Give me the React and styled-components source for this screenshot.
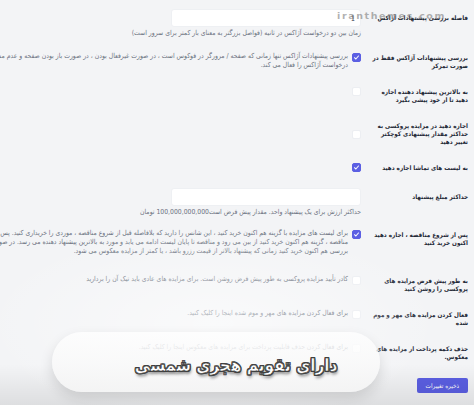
import styled, { createGlobalStyle } from 'styled-components';

const GlobalStyle = createGlobalStyle`
  html, body {
    margin: 0;
    padding: 0;
    background: #f3f4f6;
    direction: rtl;
    overflow: hidden;
    height: 405px;
  }
  body {
    font-family: "DejaVu Sans Condensed", "DejaVu Sans", sans-serif;
    color: #1f2937;
  }
`;

const settings = [
  {
    label: 'فاصله بررسی پیشنهادات آژاکس',
    type: 'input',
    value: '1',
    help: 'زمان بین دو درخواست آژاکس در ثانیه (فواصل بزرگتر به معنای بار کمتر برای سرور است)',
  },
  {
    label: 'بررسی پیشنهادات آژاکس فقط در صورت تمرکز',
    type: 'check',
    checked: true,
    help: 'بررسی پیشنهادات آژاکس تنها زمانی که صفحه / مرورگر در فوکوس است ، در صورت غیرفعال بودن ، در صورت باز بودن صفحه و عدم مشاهده آن ، درخواست آژاکس را فعال می کند.',
  },
  {
    label: 'به بالاترین پیشنهاد دهنده اجازه دهید تا از خود پیشی بگیرد',
    type: 'check',
    checked: false,
  },
  {
    label: 'اجازه دهید در مزایده پروکسی به حداکثر مقدار پیشنهادی کوچکتر تغییر دهید',
    type: 'check',
    checked: false,
    middle: true,
  },
  {
    label: 'به لیست های تماشا اجازه دهید',
    type: 'check',
    checked: true,
  },
  {
    label: 'حداکثر مبلغ پیشنهاد',
    type: 'input',
    value: '',
    help: 'حداکثر ارزش برای یک پیشنهاد واحد. مقدار پیش فرض است100,000,000,000 تومان',
  },
  {
    label: 'پس از شروع مناقصه ، اجازه دهید اکنون خرید کنید',
    type: 'check',
    checked: true,
    tall: true,
    help: 'برای لیست های مزایده با گزینه هم اکنون خرید کنید ، این شانس را دارید که بلافاصله قبل از شروع مناقصه ، موردی را خریداری کنید. پس از شروع مناقصه ، گزینه هم اکنون خرید کنید از بین می رود و مناقصه تا پایان لیست ادامه می یابد و مورد به بالاترین پیشنهاد دهنده می رسد. در صورت عدم بررسی هم اکنون خرید کنید زمانی که پیشنهاد بالاتر از قیمت رزرو باشد ، یا کمتر از مزایده معکوس می شود.',
  },
  {
    label: 'به طور پیش فرض مزایده های پروکسی را روشن کنید',
    type: 'check',
    checked: false,
    help: 'کادر تأیید مزایده پروکسی به طور پیش فرض روشن است. برای مزایده های عادی باید تیک آن را بردارید',
  },
  {
    label: 'فعال کردن مزایده های مهر و موم شده',
    type: 'check',
    checked: false,
    help: 'برای فعال کردن مزایده های مهر و موم شده اینجا را کلیک کنید.',
  },
  {
    label: 'حذف دکمه پرداخت از مزایده های معکوس.',
    type: 'check',
    checked: false,
    help: 'برای فعال کردن حذف قابلیت پرداخت برای مزایده های معکوس اینجا را کلیک کنید.',
  },
];

const Page = () => (
  <>
    <GlobalStyle />
    <Screen>
      <Form>
        {settings.map((s, i) => (
          <Row key={i} $middle={s.middle} $tall={s.tall}>
            <Label $input={s.type === 'input'}>{s.label}</Label>
            <Control>
              {s.type === 'input' ? (
                <>
                  <TextInput defaultValue={s.value} />
                  {s.help && <Help $below>{s.help}</Help>}
                </>
              ) : (
                <CheckLine>
                  <Box $checked={s.checked}>
                    {s.checked && (
                      <svg width="7" height="7" viewBox="0 0 16 16">
                        <path d="M3.5 8.5l3 3 6-7" fill="none" stroke="#fff" strokeWidth="2.4" strokeLinecap="round" strokeLinejoin="round" />
                      </svg>
                    )}
                  </Box>
                  {s.help && <Help>{s.help}</Help>}
                </CheckLine>
              )}
            </Control>
          </Row>
        ))}
        <Footer>
          <SaveButton>ذخیره تغییرات</SaveButton>
        </Footer>
      </Form>

      <Watermark>iranthemes.com</Watermark>
      <Vignette />
      <Banner>
        <BannerText>دارای تقویم هجری شمسی</BannerText>
      </Banner>
    </Screen>
  </>
);

export default Page;

const Screen = styled.div`
  position: relative;
  height: 405px;
  overflow: hidden;
`;

const Form = styled.div`
  width: 514px;
  padding: 2px 6px 0 0;
  box-sizing: border-box;
`;

const Row = styled.div`
  display: grid;
  grid-template-columns: 98px 1fr;
  column-gap: 9px;
  align-items: ${(p) => (p.$middle ? 'center' : 'start')};
  padding: ${(p) => (p.$tall ? '5px 0 12px' : '7px 0')};
`;

const Label = styled.div`
  font-size: 6.3px;
  font-weight: 700;
  line-height: 8px;
  color: #1f2937;
  padding: ${(p) => (p.$input ? '5px 0 2px' : '2px 0')};
`;

const Control = styled.div`
  display: flex;
  flex-direction: column;
  min-width: 0;
`;

const TextInput = styled.input`
  width: 190px;
  height: 18px;
  box-sizing: border-box;
  border: 1px solid #eef0f3;
  border-radius: 3px;
  background: #fff;
  padding: 0 5px;
  font-family: inherit;
  font-size: 7.5px;
  color: #374151;
  direction: rtl;
  outline: none;
`;

const CheckLine = styled.div`
  display: flex;
  align-items: flex-start;
  gap: 4px;
`;

const Box = styled.span`
  flex: none;
  width: 9px;
  height: 9px;
  margin-top: 0.5px;
  border-radius: 2px;
  box-sizing: border-box;
  display: flex;
  align-items: center;
  justify-content: center;
  background: ${(p) => (p.$checked ? '#5b5fe3' : '#fff')};
  border: 1px solid ${(p) => (p.$checked ? '#5b5fe3' : '#eceef2')};
`;

const Help = styled.p`
  margin: ${(p) => (p.$below ? '2px 0 0' : '0')};
  font-size: 6.8px;
  line-height: 9px;
  color: #6b7280;
`;

const Footer = styled.div`
  padding: 8px 0 0;
  display: flex;
`;

const SaveButton = styled.button`
  height: 15px;
  padding: 0 9px;
  border: none;
  border-radius: 2px;
  background: #5b5fe3;
  color: #fff;
  font-family: inherit;
  font-size: 6.3px;
`;

const Watermark = styled.div`
  position: absolute;
  top: 10px;
  right: 28px;
  direction: ltr;
  font-family: "DejaVu Sans", sans-serif;
  font-weight: 700;
  font-size: 9.5px;
  letter-spacing: 1.6px;
  color: rgba(110, 110, 110, 0.55);
  pointer-events: none;
`;

const Vignette = styled.div`
  position: absolute;
  inset: 0;
  pointer-events: none;
  background:
    radial-gradient(ellipse 70% 35% at 45% 80%, rgba(255, 255, 255, 0.55), rgba(255, 255, 255, 0) 70%),
    linear-gradient(to bottom, rgba(0, 0, 0, 0) 90%, rgba(0, 0, 0, 0.09) 100%);
`;

const Banner = styled.div`
  position: absolute;
  left: 52px;
  top: 332px;
  width: 328px;
  height: 60px;
  border-radius: 30px;
  background: linear-gradient(to bottom, rgba(255, 255, 255, 0.72), rgba(246, 246, 246, 0.85));
  box-shadow: 0 6px 14px rgba(0, 0, 0, 0.12);
  display: flex;
  align-items: center;
  justify-content: center;
  padding: 6px 0 0 40px;
  box-sizing: border-box;
`;

const BannerText = styled.div`
  font-family: "DejaVu Sans Condensed", "DejaVu Sans", sans-serif;
  font-weight: 700;
  font-size: 17px;
  color: #fff;
  -webkit-text-stroke: 0.5px #333;
  text-shadow:
    1px 0 0 #444, -1px 0 0 #444, 0 1px 0 #444, 0 -1px 0 #444,
    1px 1px 0 #444, -1px -1px 0 #444, 1px -1px 0 #444, -1px 1px 0 #444,
    1px 3px 3px rgba(0, 0, 0, 0.45);
`;
